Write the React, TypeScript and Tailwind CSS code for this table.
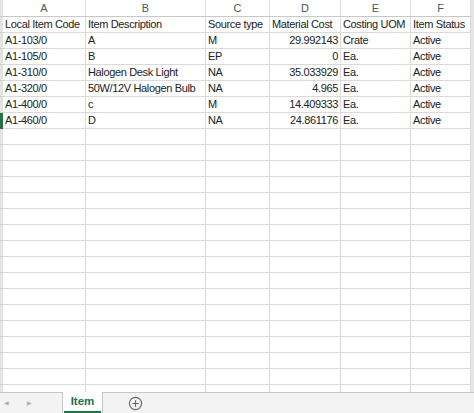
import React from 'react';

const cols = [
	{ key: 'A', w: 'w-[83px]' },
	{ key: 'B', w: 'w-[120px]' },
	{ key: 'C', w: 'w-[64px]' },
	{ key: 'D', w: 'w-[71px]' },
	{ key: 'E', w: 'w-[70px]' },
	{ key: 'F', w: 'w-[60px]' },
];

const rows: string[][] = [
	['Local Item Code', 'Item Description', 'Source type', 'Material Cost', 'Costing UOM', 'Item Status'],
	['A1-103/0', 'A', 'M', '29.992143', 'Crate', 'Active'],
	['A1-105/0', 'B', 'EP', '0', 'Ea.', 'Active'],
	['A1-310/0', 'Halogen Desk Light', 'NA', '35.033929', 'Ea.', 'Active'],
	['A1-320/0', '50W/12V Halogen Bulb', 'NA', '4.965', 'Ea.', 'Active'],
	['A1-400/0', 'c', 'M', '14.409333', 'Ea.', 'Active'],
	['A1-460/0', 'D', 'NA', '24.861176', 'Ea.', 'Active'],
];

const emptyRows = 18;

function Cell({ w, text, right }: { w: string; text?: string; right?: boolean }) {
	return (
		<div
			className={`${w} h-[16px] shrink-0 border-r border-b border-[#dadada] px-[2px] text-[11px] tracking-[-0.35px] leading-[15px] text-[#222] whitespace-nowrap overflow-hidden ${
				right ? 'text-right' : ''
			}`}
		>
			{text}
		</div>
	);
}

export default function App() {
	return (
		<div
			className="w-[474px] h-[413px] flex flex-col bg-white overflow-hidden"
			style={{ fontFamily: '"Liberation Sans", Arial, sans-serif' }}
		>
			<div className="h-[392px] flex overflow-hidden">
				{/* row header strip */}
				<div className="w-[3px] shrink-0 flex flex-col bg-[#e3e3e3]">
					<div className="h-[17px] shrink-0 border-b border-[#d0d0d0]" />
					{Array.from({ length: rows.length + emptyRows }).map((_, i) => (
						<div
							key={i}
							className={`h-[16px] shrink-0 border-b ${i === 6 ? 'bg-[#217346] border-[#217346]' : 'border-[#d0d0d0]'}`}
						/>
					))}
				</div>
				<div className="flex flex-col">
					{/* column headers */}
					<div className="flex h-[17px] shrink-0 border-b border-[#c8c8c8]">
						{cols.map((c) => (
							<div
								key={c.key}
								className={`${c.w} shrink-0 border-r border-[#e0e0e0] text-center text-[11px] leading-[16px] text-[#555]`}
							>
								{c.key}
							</div>
						))}
					</div>
					{rows.map((r, ri) => (
						<div key={ri} className="flex">
							{cols.map((c, ci) => (
								<Cell key={c.key} w={c.w} text={r[ci]} right={ri > 0 && ci === 3} />
							))}
						</div>
					))}
					{Array.from({ length: emptyRows }).map((_, ri) => (
						<div key={ri} className="flex">
							{cols.map((c) => (
								<Cell key={c.key} w={c.w} />
							))}
						</div>
					))}
				</div>
				<div className="flex-1 bg-[#e6e6e6]" />
			</div>
			{/* sheet tabs */}
			<div className="h-[21px] flex items-stretch bg-[#f3f3f3] border-t border-[#c6c6c6]">
				<div className="w-[62px] flex items-center pl-[4px] gap-[18px] text-[6px] text-[#b0b0b0]">
					<span>◀</span>
					<span>▶</span>
				</div>
				<div className="w-[41px] -mt-px bg-white border-x border-[#c6c6c6] flex flex-col">
					<div className="flex-1 flex items-center justify-center text-[11.5px] font-bold text-[#217346]">
						Item
					</div>
					<div className="h-[2px] bg-[#217346] mx-[1px]" />
				</div>
				<div className="w-[64px] flex items-center justify-center">
					<svg width="15" height="15" viewBox="0 0 16 16" fill="none" stroke="#666" strokeWidth="1.2">
						<circle cx="8" cy="8" r="6.5" />
						<path d="M8 4.5v7M4.5 8h7" />
					</svg>
				</div>
			</div>
		</div>
	);
}
